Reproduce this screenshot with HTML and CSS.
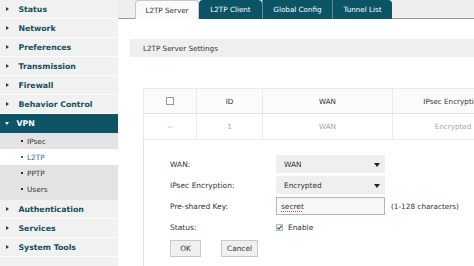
FILE: index.html
```html
<!DOCTYPE html>
<html>
<head>
<meta charset="utf-8">
<link rel="stylesheet" href="styles.css">
</head>
<body>
<div class="app">
  <nav class="side">
    <div class="item"><span class="tri"></span>Status</div>
    <div class="item"><span class="tri"></span>Network</div>
    <div class="item"><span class="tri"></span>Preferences</div>
    <div class="item"><span class="tri"></span>Transmission</div>
    <div class="item"><span class="tri"></span>Firewall</div>
    <div class="item"><span class="tri"></span>Behavior Control</div>
    <div class="item open"><span class="tri down"></span>VPN</div>
    <div class="sub">
      <div class="subitem"><span class="dot"></span>IPsec</div>
      <div class="subitem sel"><span class="dot"></span>L2TP</div>
      <div class="subitem"><span class="dot"></span>PPTP</div>
      <div class="subitem"><span class="dot"></span>Users</div>
    </div>
    <div class="item"><span class="tri"></span>Authentication</div>
    <div class="item"><span class="tri"></span>Services</div>
    <div class="item"><span class="tri"></span>System Tools</div>
    <div class="item filler"></div>
  </nav>
  <main class="main">
    <div class="tabs">
      <div class="tab active t1">L2TP Server</div>
      <div class="tab t2">L2TP Client</div>
      <div class="tab t3">Global Config</div>
      <div class="tab t4">Tunnel List</div>
    </div>
    <div class="section">L2TP Server Settings</div>
    <div class="table">
      <div class="tr head">
        <div class="td c1"><span class="cb"></span></div>
        <div class="td c2">ID</div>
        <div class="td c3">WAN</div>
        <div class="td c4">IPsec Encryption</div>
      </div>
      <div class="tr data">
        <div class="td c1">--</div>
        <div class="td c2">1</div>
        <div class="td c3">WAN</div>
        <div class="td c4">Encrypted</div>
      </div>
    </div>
    <div class="edit">
      <div class="row"><label>WAN:</label><div class="select">WAN<span class="arrow"></span></div></div>
      <div class="row"><label>IPsec Encryption:</label><div class="select">Encrypted<span class="arrow"></span></div></div>
      <div class="row"><label>Pre-shared Key:</label><div class="input"><span class="spell">secret</span></div><span class="hint">(1-128 characters)</span></div>
      <div class="row"><label>Status:</label><span class="check"><svg width="7" height="7" viewBox="0 0 7 7"><path d="M1.3 3.6 L2.9 5.1 L5.8 1.7" fill="none" stroke="#1f6d7c" stroke-width="1.2"/></svg></span><span class="en">Enable</span></div>
      <div class="buttons"><button class="btn ok">OK</button><button class="btn cancel">Cancel</button></div>
    </div>
  </main>
</div>
</body>
</html>
```
FILE: styles.css
```css
html, body { margin: 0; padding: 0; }
body {
  width: 474px; height: 266px; overflow: hidden; background: #fff;
  font-family: "DejaVu Sans", Verdana, sans-serif; color: #333;
}
.app { display: flex; height: 266px; }
.side { width: 118px; flex: none; background: #f1f1f1; }
.item {
  height: 18px; border-bottom: 1px solid #fbfbfb; background: #f1f1f1;
  display: flex; align-items: center; font-weight: bold; font-size: 7.8px;
  color: #134f5c; padding-left: 6px;
}
.tri {
  width: 0; height: 0; border-top: 2.5px solid transparent; border-bottom: 2.5px solid transparent;
  border-left: 3.5px solid #1d3f47; margin-right: 9.5px;
}
.item.open { background: #0d5566; color: #fff; border-bottom-color: #0d5566; }
.tri.down { border-left: 2.8px solid transparent; border-right: 2.8px solid transparent; border-top: 3.5px solid #fff; border-bottom: 0; margin-right: 7.5px; margin-left: -1px; }
.sub { background: #e3e3e3; padding-bottom: 3px; }
.subitem {
  height: 16px; display: flex; align-items: center; font-size: 7.3px; color: #333;
  padding-left: 21px; background: #e3e3e3;
}
.subitem.sel { background: #fff; color: #2c6a78; }
.dot { width: 2px; height: 2px; background: currentColor; margin-right: 4px; }
.item.filler { border-bottom: 0; height: 10px; }

.main { flex: 1; min-width: 0; }
.tabs {
  height: 18px; background: #eeeeee; border-bottom: 1px solid #9a9a9a;
  display: flex; padding-left: 17px; align-items: flex-end;
}
.tab {
  height: 19px; margin-bottom: -1px; box-sizing: border-box;
  display: flex; align-items: center; justify-content: center;
  font-size: 7.2px; color: #fff; background: #0b5465; border-radius: 4px 4px 0 0;
}
.tab.active { background: #fafafa; color: #333; border: 1px solid #c8c8c8; border-bottom: 0; }
.t1 { width: 64px; }
.t2 { width: 63px; }
.t3 { width: 70px; border-left: 1px solid #5d8c97; border-radius: 0; }
.t4 { width: 60px; border-left: 1px solid #5d8c97; border-radius: 0 4px 0 0; }

.section {
  margin: 20px 0 0 12px; height: 18px; background: #efefef;
  display: flex; align-items: center; padding-left: 13px; font-size: 7.2px; color: #333;
}
.table { margin: 31px 0 0 25px; width: 360px; border-top: 1px solid #e8e8e8; }
.tr { display: flex; }
.head { height: 24px; border-bottom: 1px solid #dfe5e8; background: #fbfbfb; }
.data { height: 25px; border-bottom: 1px solid #ececec; }
.td { display: flex; align-items: center; justify-content: center; font-size: 7.2px; box-sizing: border-box; }
.head .td { color: #333; }
.data .td { color: #a5a5a5; }
.td + .td { border-left: 1px solid #ebebeb; }
.c1 { width: 53px; border-left: 1px solid #ebebeb; }
.c2 { width: 66px; }
.c3 { width: 130px; }
.c4 { width: 111px; padding-left: 10px; white-space: nowrap; }
.cb { width: 6px; height: 6px; border: 1px solid #999; background: #fff; }

.edit {
  margin-left: 25px; border-left: 1px solid #e2e2e2; height: 130px;
  padding: 15px 0 0 26px; box-sizing: border-box;
}
.row { display: flex; align-items: center; height: 18px; margin-bottom: 3px; font-size: 7.5px; }
.row label { width: 106px; flex: none; }
.select {
  width: 109px; height: 18px; background: #efefef; box-sizing: border-box;
  display: flex; align-items: center; padding-left: 8px; position: relative; font-size: 7.4px;
}
.arrow {
  position: absolute; right: 5px; top: 7.5px; width: 0; height: 0;
  border-left: 3.2px solid transparent; border-right: 3.2px solid transparent; border-top: 4px solid #222;
}
.input {
  width: 109px; height: 18px; box-sizing: border-box; border: 1px solid #9fbdc4; background: #f8f8f8;
  display: flex; align-items: center; padding-left: 4px; font-size: 7.4px;
}
.spell { text-decoration: underline dotted #d44; text-underline-offset: 2px; }
.hint { margin-left: 6px; font-size: 7.3px; }
.check {
  width: 7px; height: 7px; border: 1px solid #b8b8b8; background: #f7f7f7; box-sizing: border-box;
  display: flex; align-items: center; justify-content: center; margin-right: 5px;
}
.check svg { flex: none; }
.en { font-size: 7.4px; }
.buttons { display: flex; gap: 20px; margin-top: 4px; }
.btn {
  font-family: inherit; font-size: 7.4px; color: #333; background: #f0f0f0;
  border: 1px solid #c9c9c9; height: 17px; padding: 0; margin: 0; border-radius: 0;
}
.ok { width: 31px; }
.cancel { width: 37px; }
```
